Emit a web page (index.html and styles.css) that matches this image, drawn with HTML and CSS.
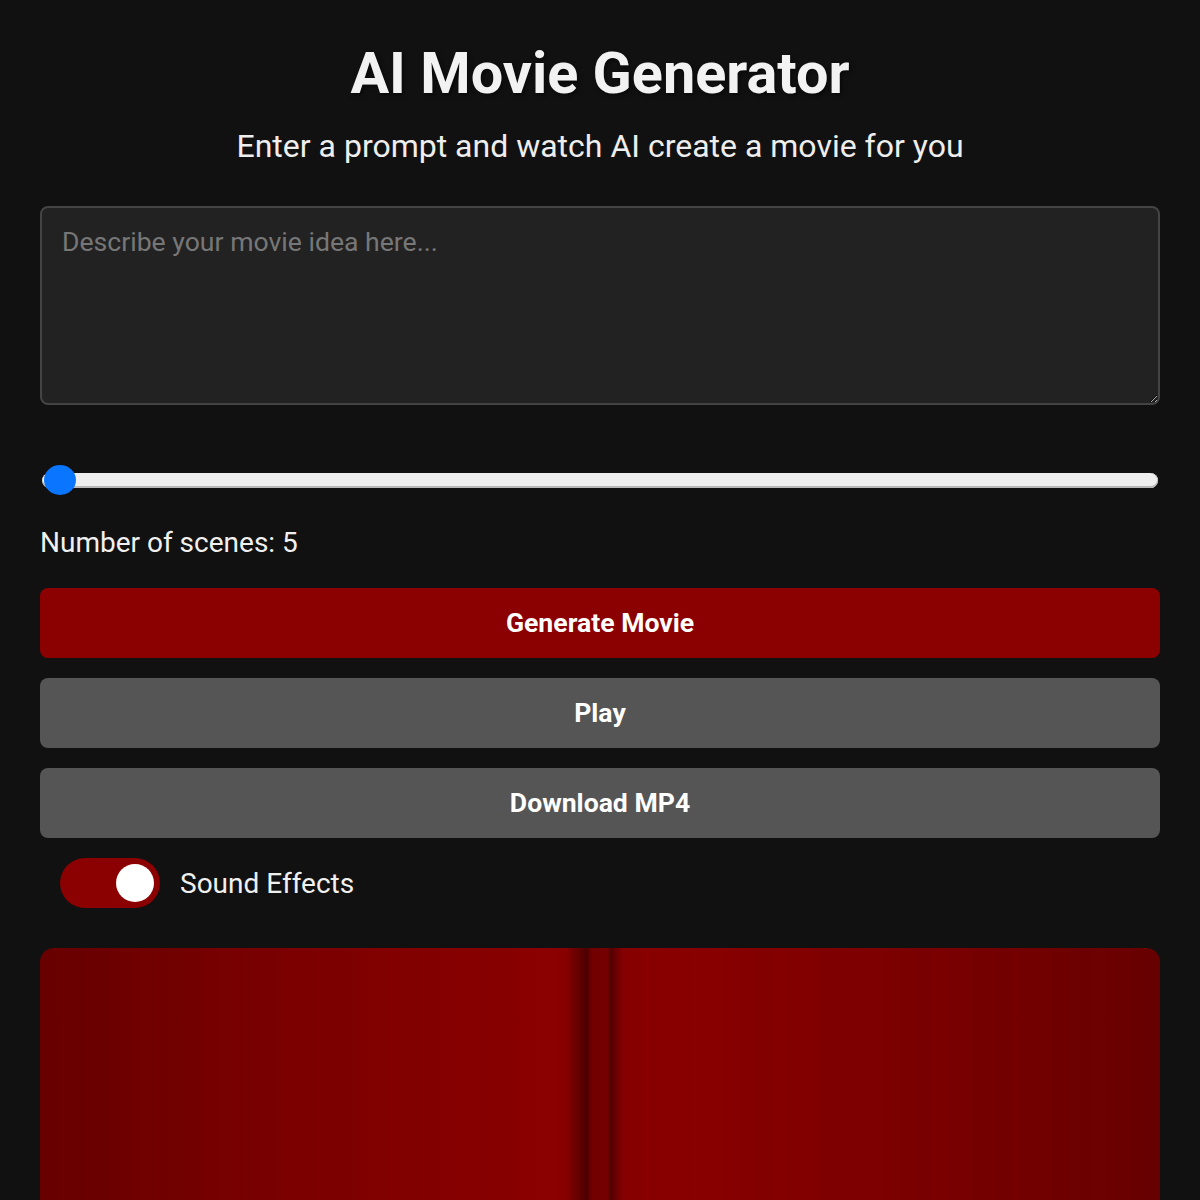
FILE: index.html
```html
<!DOCTYPE html>
<html lang="en">
<head>
<meta charset="utf-8">
<title>AI Movie Generator</title>
<link rel="stylesheet" href="styles.css">
</head>
<body>
<main class="app">
  <h1 class="title">AI Movie Generator</h1>
  <p class="subtitle">Enter a prompt and watch AI create a movie for you</p>
  <textarea class="prompt" placeholder="Describe your movie idea here..."></textarea>
  <input class="scenes" type="range" min="5" max="30" value="5">
  <div class="scene-label">Number of scenes: 5</div>
  <button class="btn btn-primary">Generate Movie</button>
  <button class="btn btn-secondary">Play</button>
  <button class="btn btn-secondary">Download MP4</button>
  <label class="toggle-row">
    <span class="toggle"><span class="knob"></span></span>
    <span class="toggle-text">Sound Effects</span>
  </label>
  <div class="stage">
    <div class="curtain curtain-left"></div>
    <div class="curtain-gap"></div>
    <div class="curtain curtain-right"></div>
  </div>
</main>
</body>
</html>
```
FILE: styles.css
```css
* { box-sizing: border-box; }
html, body {
  margin: 0;
  background: #111111;
  color: #f0f0f0;
  font-family: Roboto, "Liberation Sans", Arial, sans-serif;
}
.app {
  display: flex;
  flex-direction: column;
  padding: 41px 40px 0;
}
.title {
  margin: 0;
  text-align: center;
  font-size: 57.6px;
  font-weight: 700;
  line-height: 66px;
  color: #f2f2f2;
  text-shadow: 2px 2px 4px rgba(0,0,0,0.5);
}
.subtitle {
  margin: 20px 0 0;
  text-align: center;
  font-size: 32px;
  line-height: 38px;
  color: #eeeeee;
}
.prompt {
  margin-top: 41px;
  height: 199px;
  width: 100%;
  background: #222222;
  border: 2px solid #444444;
  border-radius: 8px;
  padding: 18px 20px 20px;
  font-family: Roboto, "Liberation Sans", Arial, sans-serif;
  font-size: 26.6px;
  color: #eeeeee;
  resize: vertical;
  outline: none;
}
.prompt::placeholder { color: #777777; }
.scenes {
  -webkit-appearance: none;
  appearance: none;
  margin: 59px 0 0;
  width: 100%;
  height: 32px;
  background: transparent;
  padding: 0 2px;
}
.scenes::-webkit-slider-runnable-track {
  height: 15px;
  background: #eeeeee;
  border-radius: 8px;
  box-shadow: inset 0 -2px 0 #b8b8b8, inset -1px 0 0 #c8c8c8;
}
.scenes::-webkit-slider-thumb {
  -webkit-appearance: none;
  width: 32px;
  height: 30px;
  border-radius: 50%;
  background: #0a75ff;
  margin-top: -7.5px;
  border: none;
  transform: translateX(2px);
}
.scene-label {
  margin-top: 30px;
  font-size: 28px;
  line-height: 33px;
  color: #f0f0f0;
}
.btn {
  height: 70px;
  width: 100%;
  border: none;
  border-radius: 8px;
  color: #ffffff;
  font-family: Roboto, "Liberation Sans", Arial, sans-serif;
  font-size: 26.6px;
  font-weight: 700;
  cursor: pointer;
  padding: 0 0 2px;
}
.btn-primary { background: #8b0000; margin-top: 29px; }
.btn-secondary { background: #555555; margin-top: 20px; }
.toggle-row {
  display: flex;
  align-items: center;
  gap: 20px;
  margin-top: 20px;
  padding-left: 20px;
}
.toggle {
  position: relative;
  width: 100px;
  height: 50px;
  border-radius: 25px;
  background: #8b0000;
  flex: none;
}
.knob {
  position: absolute;
  right: 6px;
  top: 6px;
  width: 38px;
  height: 38px;
  border-radius: 50%;
  background: #ffffff;
}
.toggle-text {
  font-size: 28px;
  color: #f0f0f0;
}
.stage {
  margin-top: 40px;
  height: 560px;
  border-radius: 14px;
  overflow: hidden;
  display: flex;
}
.curtain { flex: 1; }
.curtain-left {
  background:
    repeating-linear-gradient(90deg, rgba(0,0,0,0) 0 40px, rgba(0,0,0,0.015) 40px 80px),
    linear-gradient(90deg, #680000 0%, #7a0000 40%, #8b0000 92%, #8a0000 96%, #4a0000 100%);
}
.curtain-gap {
  width: 24px;
  flex: none;
  background: linear-gradient(90deg, #5a0000 0%, #730000 20%, #740000 80%, #4a0000 100%);
}
.curtain-right {
  background:
    repeating-linear-gradient(90deg, rgba(0,0,0,0) 0 40px, rgba(0,0,0,0.015) 40px 80px),
    linear-gradient(90deg, #5a0000 0%, #850000 2%, #8b0000 10%, #7a0000 60%, #680000 100%);
}
```
